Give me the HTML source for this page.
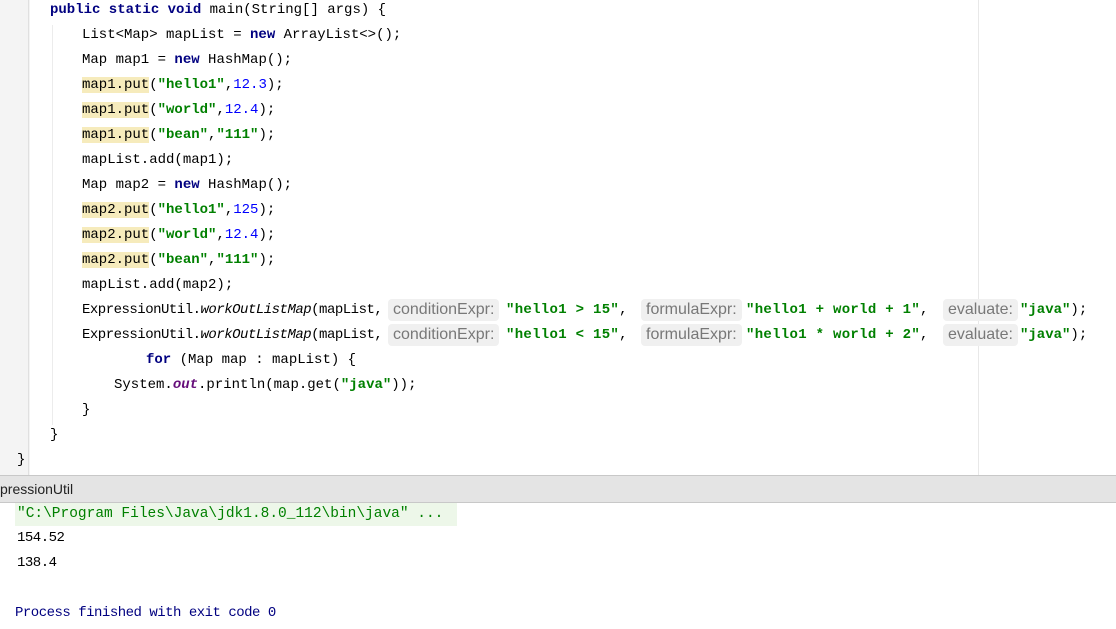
<!DOCTYPE html>
<html><head><meta charset="utf-8"><style>
body{margin:0;width:1116px;height:629px;overflow:hidden;background:#fff;position:relative;font-family:"Liberation Mono","Noto Sans CJK SC",monospace;font-size:14px;color:#000}
.l{position:absolute;white-space:pre;line-height:20px;height:20px}
.k{color:#000080;font-weight:bold}
.s{color:#008000;font-weight:bold}
.n{color:#0000ff}
.i{font-style:italic}
.f{color:#660e7a;font-style:italic;font-weight:bold}
.hl{background:#f6ebbc}
.h{position:absolute;height:22px;line-height:22px;padding:0 5px;background:#f0f0f0;border-radius:4px;color:#787878;font-family:"Liberation Sans",sans-serif;font-size:16px;white-space:pre}
.c{letter-spacing:-0.5px}
.w{letter-spacing:0.3px}
</style></head><body>
<div style="position:absolute;left:0;top:0;width:30px;height:475px;background:#f4f4f4"></div>
<div style="position:absolute;left:28px;top:0;width:1px;height:475px;background:#e0e0e0"></div>
<div style="position:absolute;left:978px;top:0;width:1px;height:475px;background:#e8e8e8"></div>
<div style="position:absolute;left:52px;top:25px;width:1px;height:400px;background:#ececec"></div>
<div style="position:absolute;left:0;top:475px;width:1116px;height:1px;background:#c8c8c8"></div>
<div style="position:absolute;left:0;top:476px;width:1116px;height:26px;background:#e4e4e4;border-bottom:1px solid #c8c8c8;font-family:'Liberation Sans',sans-serif;font-size:14px;line-height:26px;color:#222">pressionUtil</div>
<div class="l" style="left:50px;top:0"><span class="k">public static void</span> main(String[] args) {</div>
<div class="l" style="left:82px;top:25px">List&lt;Map&gt; mapList = <span class="k">new</span> ArrayList&lt;&gt;();</div>
<div class="l" style="left:82px;top:50px">Map map1 = <span class="k">new</span> HashMap();</div>
<div class="l" style="left:82px;top:75px"><span class="hl">map1.put</span>(<span class="s">"hello1"</span>,<span class="n">12.3</span>);</div>
<div class="l" style="left:82px;top:100px"><span class="hl">map1.put</span>(<span class="s">"world"</span>,<span class="n">12.4</span>);</div>
<div class="l" style="left:82px;top:125px"><span class="hl">map1.put</span>(<span class="s">"bean"</span>,<span class="s">"111"</span>);</div>
<div class="l" style="left:82px;top:150px">mapList.add(map1);</div>
<div class="l" style="left:82px;top:175px">Map map2 = <span class="k">new</span> HashMap();</div>
<div class="l" style="left:82px;top:200px"><span class="hl">map2.put</span>(<span class="s">"hello1"</span>,<span class="n">125</span>);</div>
<div class="l" style="left:82px;top:225px"><span class="hl">map2.put</span>(<span class="s">"world"</span>,<span class="n">12.4</span>);</div>
<div class="l" style="left:82px;top:250px"><span class="hl">map2.put</span>(<span class="s">"bean"</span>,<span class="s">"111"</span>);</div>
<div class="l" style="left:82px;top:275px">mapList.add(map2);</div>
<div class="l c" style="left:82px;top:300px">ExpressionUtil.<span class="i">workOutListMap</span>(mapList,</div>
<div class="h" style="left:388px;top:299px">conditionExpr:</div>
<div class="l w" style="left:506px;top:300px"><span class="s">"hello1 &gt; 15"</span>,</div>
<div class="h" style="left:641px;top:299px">formulaExpr:</div>
<div class="l w" style="left:746px;top:300px"><span class="s">"hello1 + world + 1"</span>,</div>
<div class="h" style="left:943px;top:299px">evaluate:</div>
<div class="l" style="left:1020px;top:300px"><span class="s">"java"</span>);</div>
<div class="l c" style="left:82px;top:325px">ExpressionUtil.<span class="i">workOutListMap</span>(mapList,</div>
<div class="h" style="left:388px;top:324px">conditionExpr:</div>
<div class="l w" style="left:506px;top:325px"><span class="s">"hello1 &lt; 15"</span>,</div>
<div class="h" style="left:641px;top:324px">formulaExpr:</div>
<div class="l w" style="left:746px;top:325px"><span class="s">"hello1 * world + 2"</span>,</div>
<div class="h" style="left:943px;top:324px">evaluate:</div>
<div class="l" style="left:1020px;top:325px"><span class="s">"java"</span>);</div>
<div class="l" style="left:146px;top:350px"><span class="k">for</span> (Map map : mapList) {</div>
<div class="l" style="left:114px;top:375px">System.<span class="f">out</span>.println(map.get(<span class="s">"java"</span>));</div>
<div class="l" style="left:82px;top:400px">}</div>
<div class="l" style="left:50px;top:425px">}</div>
<div class="l" style="left:17px;top:450px">}</div>
<div style="position:absolute;left:15px;top:503px;width:442px;height:23px;background:#edf7e9"></div>
<div class="l" style="left:17px;top:504px;color:#008000;font-size:14.5px">"C:\Program Files\Java\jdk1.8.0_112\bin\java" ...</div>
<div class="l c" style="left:17px;top:528px">154.52</div>
<div class="l c" style="left:17px;top:553px">138.4</div>
<div class="l c" style="left:15px;top:603px;color:#000080">Process finished with exit code 0</div>
</body></html>
